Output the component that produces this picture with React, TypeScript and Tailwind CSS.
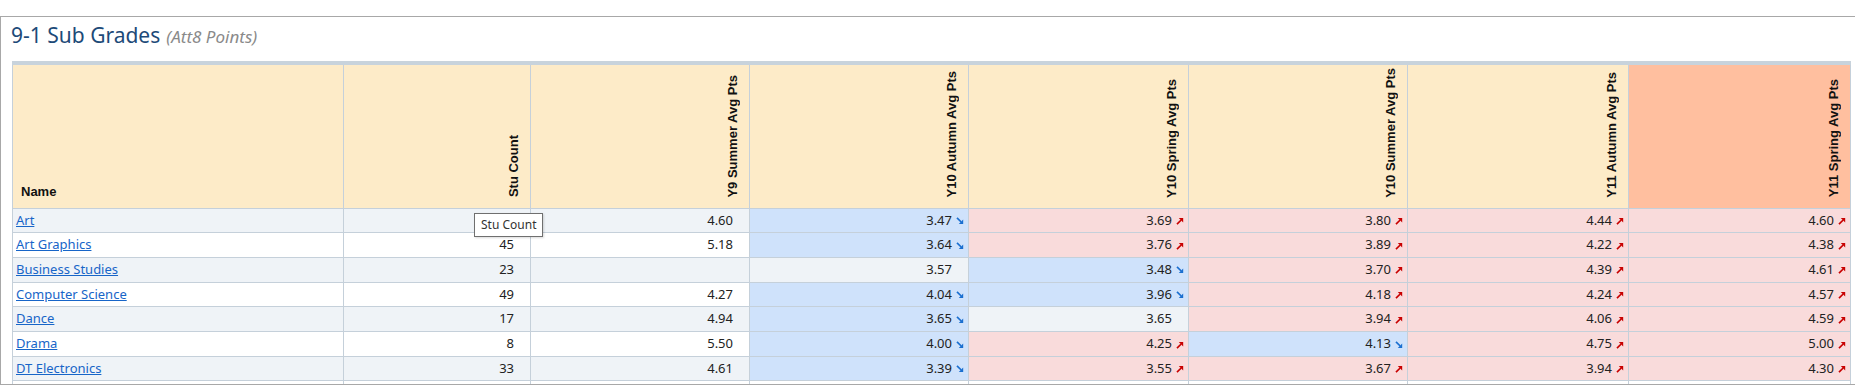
import React from 'react';

type Trend = 'u' | 'd' | '';

type Row = {
  name: string;
  stu: string;
  y9: string;
  vals: [string, Trend][];
};

const rows: Row[] = [
  { name: 'Art', stu: '', y9: '4.60', vals: [['3.47', 'd'], ['3.69', 'u'], ['3.80', 'u'], ['4.44', 'u'], ['4.60', 'u']] },
  { name: 'Art Graphics', stu: '45', y9: '5.18', vals: [['3.64', 'd'], ['3.76', 'u'], ['3.89', 'u'], ['4.22', 'u'], ['4.38', 'u']] },
  { name: 'Business Studies', stu: '23', y9: '', vals: [['3.57', ''], ['3.48', 'd'], ['3.70', 'u'], ['4.39', 'u'], ['4.61', 'u']] },
  { name: 'Computer Science', stu: '49', y9: '4.27', vals: [['4.04', 'd'], ['3.96', 'd'], ['4.18', 'u'], ['4.24', 'u'], ['4.57', 'u']] },
  { name: 'Dance', stu: '17', y9: '4.94', vals: [['3.65', 'd'], ['3.65', ''], ['3.94', 'u'], ['4.06', 'u'], ['4.59', 'u']] },
  { name: 'Drama', stu: '8', y9: '5.50', vals: [['4.00', 'd'], ['4.25', 'u'], ['4.13', 'd'], ['4.75', 'u'], ['5.00', 'u']] },
  { name: 'DT Electronics', stu: '33', y9: '4.61', vals: [['3.39', 'd'], ['3.55', 'u'], ['3.67', 'u'], ['3.94', 'u'], ['4.30', 'u']] },
];

const headers = [
  'Stu Count',
  'Y9 Summer Avg Pts',
  'Y10 Autumn Avg Pts',
  'Y10 Spring Avg Pts',
  'Y10 Summer Avg Pts',
  'Y11 Autumn Avg Pts',
  'Y11 Spring Avg Pts',
];

const Arrow = ({ dir }: { dir: Trend }) => {
  if (dir === 'u') {
    return (
      <svg width="8" height="8" viewBox="0 0 8 8" className="inline-block">
        <path d="M1 7.2 L5.2 3" stroke="#c80000" strokeWidth="1.7" />
        <path d="M2.8 1 H7.2 V5.4 Z" fill="#c80000" />
      </svg>
    );
  }
  if (dir === 'd') {
    return (
      <svg width="8" height="8" viewBox="0 0 8 8" className="inline-block">
        <path d="M1 0.8 L5.2 5" stroke="#1a6fd0" strokeWidth="1.7" />
        <path d="M7.2 2.6 V7 H2.8 Z" fill="#1a6fd0" />
      </svg>
    );
  }
  return null;
};

const NumCell = ({ v, t, bg }: { v: string; t: Trend; bg: string }) => (
  <td className={`border border-[#c5d0da] text-right pr-[4px] ${bg}`}>
    <span>{v}</span>
    <span className="inline-block w-[12px] text-right">
      <Arrow dir={t} />
    </span>
  </td>
);

export default function App() {
  return (
    <div className="h-[386px] bg-white pt-[16px] font-['Noto_Sans',sans-serif] text-[#222]">
      <div className="relative h-[369px] overflow-hidden border-t border-l border-b border-[#a8a8a8]">
        {/* title */}
        <div className="flex items-baseline gap-[6px] h-[44px] pt-[4px] pl-[10px]">
          <h2 className="text-[21px] leading-[28px] text-[#1d4a78]">9-1 Sub Grades</h2>
          <span className="text-[17px] italic text-[#8a8a8a]">(Att8 Points)</span>
        </div>

        <table className="ml-[11px] w-[1838px] table-fixed border-collapse border-t-4 border-t-[#c8d3dc] text-[13px]">
          <colgroup>
            <col className="w-[331px]" />
            <col className="w-[187px]" />
            <col className="w-[219px]" />
            <col className="w-[219px]" />
            <col className="w-[220px]" />
            <col className="w-[219px]" />
            <col className="w-[221px]" />
            <col className="w-[222px]" />
          </colgroup>
          <thead>
            <tr className="h-[145px]">
              <th className="border-x border-b border-[#c5d0da] bg-[#fdebc8] align-bottom text-left pl-[8px] pb-[6px] font-['Liberation_Sans',sans-serif] font-bold text-[13px] text-[#111]">
                Name
              </th>
              {headers.map((h, i) => (
                <th
                  key={h}
                  className={`border-x border-b border-[#c5d0da] align-bottom pr-[9px] pb-[10px] font-['Liberation_Sans',sans-serif] font-bold text-[13px] text-[#111] ${
                    i === headers.length - 1 ? 'bg-[#ffbf9f]' : 'bg-[#fdebc8]'
                  }`}
                >
                  <div className="flex justify-end">
                    <span className="[writing-mode:vertical-rl] rotate-180 leading-[15px] whitespace-nowrap">{h}</span>
                  </div>
                </th>
              ))}
            </tr>
          </thead>
          <tbody>
            {rows.map((r, i) => {
              const stripe = i % 2 === 0 ? 'bg-[#eff3f7]' : 'bg-white';
              return (
                <tr key={r.name} className="h-[24.7px]">
                  <td className={`border border-[#c5d0da] pl-[3px] ${stripe}`}>
                    <a href="#" className="text-[#1765c8] underline">
                      {r.name}
                    </a>
                  </td>
                  <NumCell v={r.stu} t="" bg={stripe} />
                  <NumCell v={r.y9} t="" bg={stripe} />
                  {r.vals.map(([v, t], j) => (
                    <NumCell
                      key={j}
                      v={v}
                      t={t}
                      bg={t === 'u' ? 'bg-[#f9dbdb]' : t === 'd' ? 'bg-[#cfe2fb]' : stripe}
                    />
                  ))}
                </tr>
              );
            })}
            <tr className="h-[24.7px] bg-white">
              {Array.from({ length: 8 }).map((_, j) => (
                <td key={j} className="border border-[#c5d0da]">&nbsp;</td>
              ))}
            </tr>
          </tbody>
        </table>

        {/* hover tooltip over the Stu Count column */}
        <div className="absolute left-[473px] top-[196px] h-[24px] px-[6px] border border-[#6f6f6f] bg-white text-[12px] leading-[22px] text-[#333] shadow-[1px_1px_2px_rgba(0,0,0,0.15)] whitespace-nowrap">
          Stu Count
        </div>
      </div>
    </div>
  );
}
